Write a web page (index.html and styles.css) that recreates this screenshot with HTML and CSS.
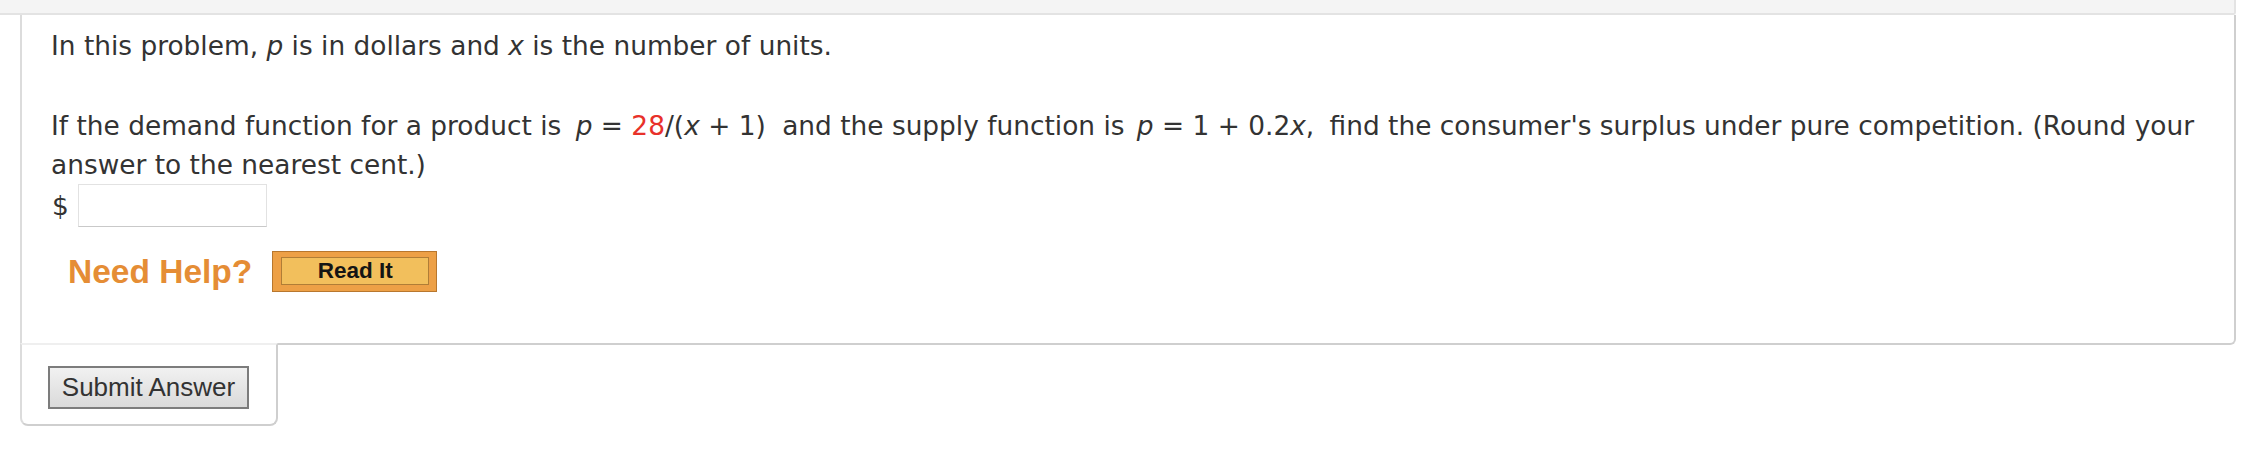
FILE: index.html
```html
<!DOCTYPE html>
<html lang="en">
<head>
<meta charset="utf-8">
<title>Consumer's surplus</title>
<link rel="stylesheet" href="styles.css">
</head>
<body>
<div class="topbar"></div>
<div class="question">
  <p class="intro">In this problem, <i>p</i> is in dollars and <i>x</i> is the number of units.</p>
  <p class="prompt">If the demand function for a product is <span class="math m1"><i>p</i> = <span class="red">28</span>/(<i>x</i> + 1)</span> and the supply function is <span class="math m2"><i>p</i> = 1 + 0.2<i>x</i>,</span> find the consumer's surplus under pure competition. (Round your answer to the nearest cent.)</p>
  <div class="answer"><span class="dollar">$</span><input class="ans-input" type="text" aria-label="answer"></div>
  <div class="help">
    <span class="need">Need Help?</span>
    <button class="readit" type="button"><span class="readit-inner">Read It</span></button>
  </div>
</div>
<div class="submit-wrap">
  <button class="submit" type="button">Submit Answer</button>
</div>
</body>
</html>
```

FILE: styles.css
```css
html, body {
  margin: 0;
  padding: 0;
  background: #ffffff;
}

body {
  font-family: "DejaVu Sans", Verdana, sans-serif;
  color: #333333;
}

.topbar {
  width: 2234px;
  height: 13px;
  background: #f4f4f4;
  border-bottom: 2px solid #e3e3e3;
  border-right: 2px solid #e3e3e3;
  border-bottom-right-radius: 3px;
}

.question {
  margin-left: 20px;
  width: 2216px;
  box-sizing: border-box;
  border-left: 2px solid #dcdcdc;
  border-right: 2px solid #cfcfcf;
  border-bottom: 2px solid #cfcfcf;
  border-bottom-right-radius: 6px;
  padding: 11px 28px 51px 29px;
  font-size: 26.4px;
  line-height: 39px;
}

.question p {
  margin: 0;
}

.intro {
  margin-bottom: 41px !important;
}

.math {
  white-space: nowrap;
}

.m1 {
  margin-left: 6px;
  margin-right: 8px;
}

.m2 {
  margin-left: 4px;
  margin-right: 7px;
}

.red {
  color: #e8312a;
}

.answer {
  display: flex;
  align-items: center;
  height: 43px;
}

.dollar {
  width: 26px;
  padding-left: 1px;
}

.ans-input {
  width: 189px;
  height: 43px;
  box-sizing: border-box;
  margin: 0;
  border: 1px solid #e2e2e2;
  border-bottom-color: #c9c9c9;
  background: #ffffff;
  padding: 0 6px;
  font-size: 20px;
  outline: none;
}

.help {
  display: flex;
  align-items: center;
  gap: 20px;
  margin-top: 24px;
  padding-left: 17px;
}

.need {
  font-family: "Liberation Sans", Arial, sans-serif;
  font-weight: bold;
  font-size: 33.5px;
  line-height: 41px;
  color: #e58d35;
}

.readit {
  display: flex;
  width: 165px;
  height: 41px;
  box-sizing: border-box;
  margin: 0;
  padding: 5px 7px 6px 8px;
  border: 1px solid #b8772e;
  background: #eda046;
  cursor: pointer;
}

.readit-inner {
  flex: 1;
  display: flex;
  align-items: center;
  justify-content: center;
  border: 1px solid #b07d36;
  background: #f2bf5c;
  font-family: "Liberation Sans", Arial, sans-serif;
  font-weight: bold;
  font-size: 22.5px;
  color: #141414;
}

.submit-wrap {
  margin-left: 20px;
  margin-top: -2px;
  width: 258px;
  box-sizing: border-box;
  background: #ffffff;
  border-top: 2px solid #efefef;
  border-left: 2px solid #dcdcdc;
  border-right: 2px solid #cfcfcf;
  border-bottom: 2px solid #cfcfcf;
  border-bottom-left-radius: 8px;
  border-bottom-right-radius: 8px;
  padding: 21px 0 15px 26px;
}

.submit {
  display: block;
  width: 201px;
  height: 43px;
  box-sizing: border-box;
  margin: 0;
  padding: 0;
  border: 2px solid #7c7c7c;
  background: linear-gradient(#f1f1f1, #dadada);
  font-family: "Liberation Sans", Arial, sans-serif;
  font-size: 26px;
  color: #333333;
  cursor: pointer;
}
```
